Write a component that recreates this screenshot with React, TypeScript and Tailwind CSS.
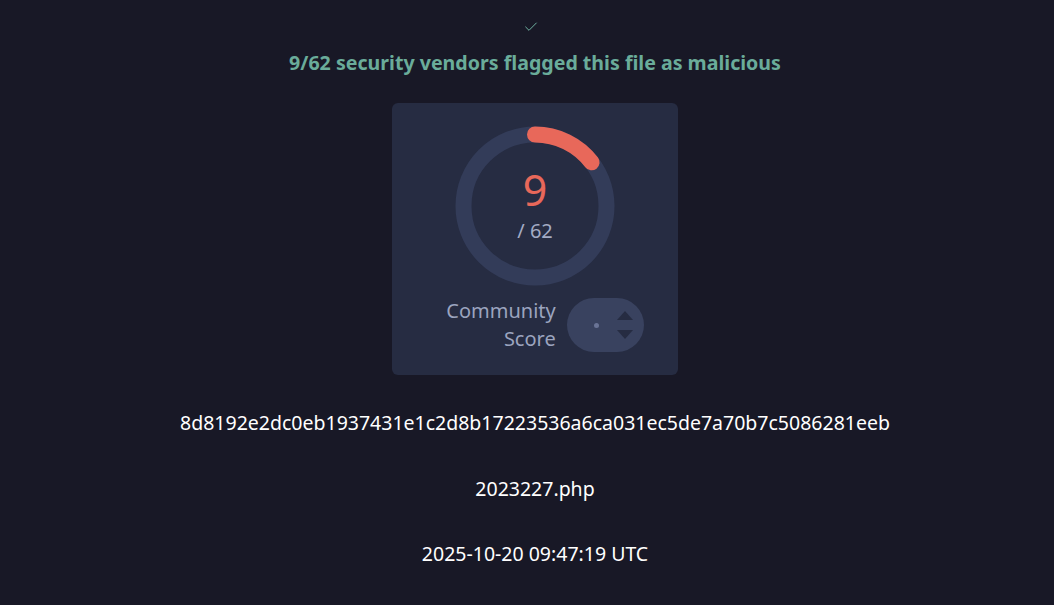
import { Check } from 'lucide-react'

const HASH = '8d8192e2dc0eb1937431e1c2d8b17223536a6ca031ec5de7a70b7c5086281eeb'
const POSITIVES = 9
const TOTAL = 62

function DetectionRing() {
  const r = 71.5
  const c = 2 * Math.PI * r
  const frac = POSITIVES / TOTAL
  return (
    <div className="relative w-[160px] h-[160px]">
      <svg width="160" height="160" viewBox="0 0 160 160" className="absolute inset-0">
        <circle cx="80" cy="80" r={r} fill="none" stroke="#333c59" strokeWidth="16" />
        <circle
          cx="80" cy="80" r={r} fill="none" stroke="#e8685a" strokeWidth="16"
          strokeLinecap="round"
          strokeDasharray={`${c * frac} ${c}`}
          transform="rotate(-90 80 80)"
        />
      </svg>
      <div className="absolute inset-0 flex flex-col items-center justify-center">
        <span className="text-[43px] leading-none text-[#e8685a] -mt-[4px]">{POSITIVES}</span>
        <span className="text-[20px] leading-none text-[#a3abc4] mt-[10px]">/ {TOTAL}</span>
      </div>
    </div>
  )
}

export default function App() {
  return (
    <div
      className="w-full h-screen bg-[#181826] flex flex-col items-center pl-[16px] text-white overflow-hidden"
      style={{ fontFamily: '"Noto Sans", sans-serif' }}
    >
      <Check className="mt-[19px] mr-[8px] w-[16px] h-[16px] text-[#6fb3a2]" strokeWidth={1.5} />
      <h1 className="mt-[14px] text-[19.6px] font-bold leading-[28px] text-[#6aac9a]">
        {POSITIVES}/{TOTAL} security vendors flagged this file as malicious
      </h1>

      {/* Score card */}
      <div className="mt-[26px] w-[286px] h-[272px] shrink-0 bg-[#262c42] rounded-[6px] flex flex-col items-center pt-[23px]">
        <DetectionRing />
        <div className="mt-[11px] flex items-center gap-[11px] pl-[20px]">
          <div className="text-right text-[20px] leading-[28px] text-[#9ba4bf]">
            <div>Community</div>
            <div>Score</div>
          </div>
          <div className="w-[77px] h-[54px] rounded-full bg-[#39425f] flex items-center pl-[27px] gap-[18px]">
            <span className="w-[5px] h-[5px] rounded-full bg-[#6a7496]" />
            <div className="flex flex-col gap-[10px]">
              <svg width="16" height="9" viewBox="0 0 16 9"><path d="M8 0L16 9H0Z" fill="#262c42" /></svg>
              <svg width="16" height="9" viewBox="0 0 16 9"><path d="M0 0H16L8 9Z" fill="#262c42" /></svg>
            </div>
          </div>
        </div>
      </div>

      <div className="mt-[34px] text-[19.5px] leading-[28px]">{HASH}</div>
      <div className="mt-[38px] text-[19.5px] leading-[28px]">2023227.php</div>
      <div className="mt-[37px] text-[19.5px] leading-[28px]">2025-10-20 09:47:19 UTC</div>
    </div>
  )
}
